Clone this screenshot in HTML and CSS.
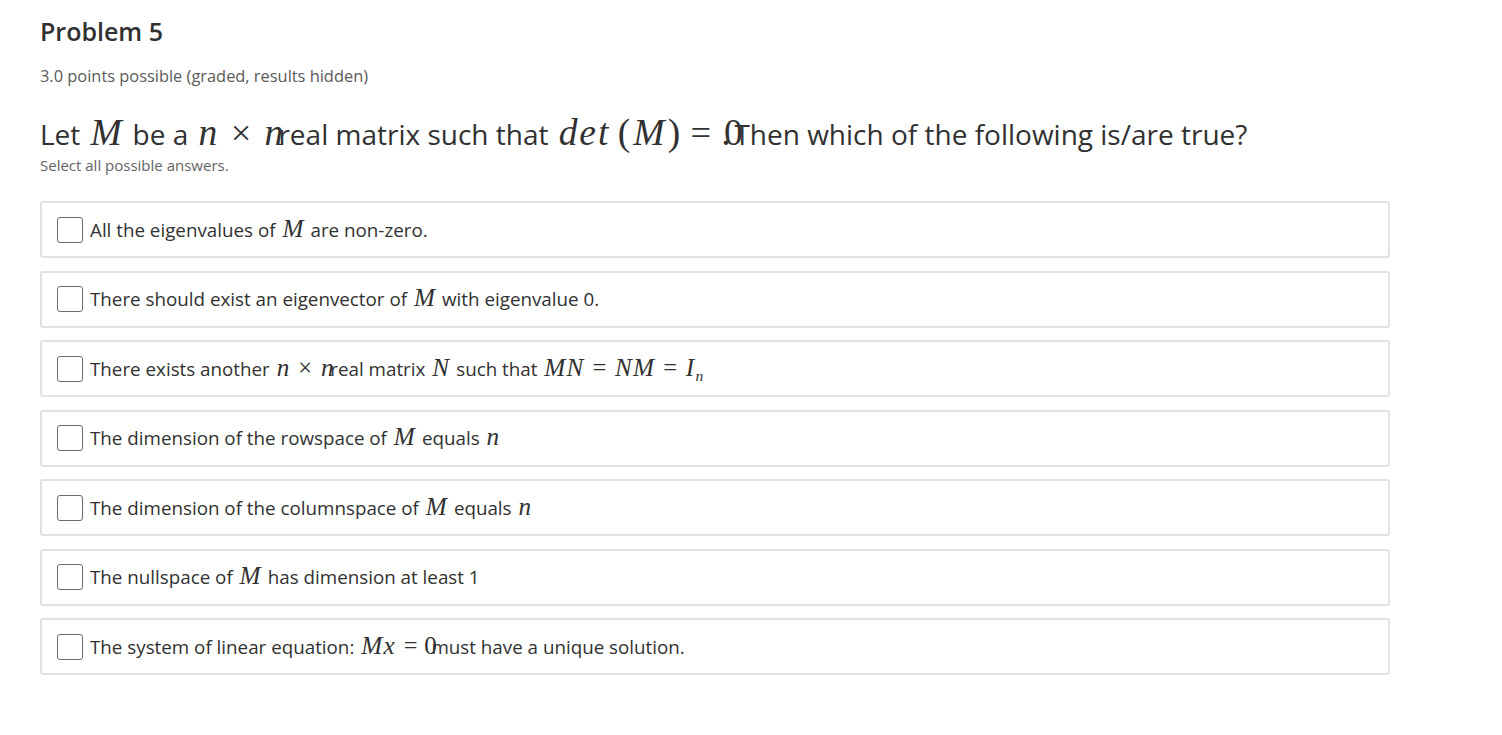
FILE: index.html
```html
<!DOCTYPE html>
<html lang="en">
<head>
<meta charset="utf-8">
<title>Problem 5</title>
<link rel="stylesheet" href="styles.css">
</head>
<body>
<div class="problem">
  <h3 class="title">Problem 5</h3>
  <div class="points">3.0 points possible (graded, results hidden)</div>
  <p class="question">Let <span class="m">M</span> be a <span class="m">n</span><span class="op">×</span><span class="m ov">n</span>real matrix such that <span class="m fn">det</span><span class="mr">(</span><span class="m">M</span><span class="mr">)</span><span class="op">=</span><span class="mr dot">.</span><span class="mr ov">0</span>Then which of the following is/are true?</p>
  <div class="hint">Select all possible answers.</div>
  <div class="choices">
    <label class="choice"><span class="box"></span><span class="txt">All the eigenvalues of <span class="m">M</span> are non-zero.</span></label>
    <label class="choice"><span class="box"></span><span class="txt">There should exist an eigenvector of <span class="m">M</span> with eigenvalue 0.</span></label>
    <label class="choice"><span class="box"></span><span class="txt">There exists another <span class="m">n</span><span class="op">×</span><span class="m ov">n</span>real matrix <span class="m">N</span> such that <span class="m">MN</span><span class="op">=</span><span class="m">NM</span><span class="op">=</span><span class="m">I<sub>n</sub></span></span></label>
    <label class="choice"><span class="box"></span><span class="txt">The dimension of the rowspace of <span class="m">M</span> equals <span class="m">n</span></span></label>
    <label class="choice"><span class="box"></span><span class="txt">The dimension of the columnspace of <span class="m">M</span> equals <span class="m">n</span></span></label>
    <label class="choice"><span class="box"></span><span class="txt">The nullspace of <span class="m">M</span> has dimension at least 1</span></label>
    <label class="choice"><span class="box"></span><span class="txt">The system of linear equation: <span class="m">Mx</span><span class="op">=</span><span class="mr ov">0</span>must have a unique solution.</span></label>
  </div>
</div>
</body>
</html>
```
FILE: styles.css
```css
html, body {
  margin: 0;
  padding: 0;
  background: #ffffff;
}
body {
  font-family: "Open Sans", "Noto Sans", sans-serif;
  color: #313131;
}
.problem {
  padding: 14px 0 0 40px;
  width: 1350px;
}
.title {
  margin: 0;
  font-size: 25px;
  font-weight: 600;
  line-height: 34px;
  color: #313131;
}
.points {
  margin-top: 17px;
  font-size: 16.4px;
  line-height: 22px;
  color: #5a5a5a;
}
.question {
  margin: 30px 0 0 0;
  font-size: 28px;
  line-height: 34px;
  color: #313131;
}
.hint {
  margin-top: 4px;
  font-size: 15px;
  line-height: 20px;
  color: #646464;
}
.m {
  font-family: "Liberation Serif", "DejaVu Serif", serif;
  font-style: italic;
  font-size: 1.34em;
  line-height: 0;
  letter-spacing: 0.05em;
  padding: 0 0.04em 0 0.08em;
}
.fn {
  margin-right: 0.16em;
}
.mr {
  font-family: "Liberation Serif", "DejaVu Serif", serif;
  font-size: 1.34em;
  line-height: 0;
}
.op {
  font-family: "Liberation Serif", "DejaVu Serif", serif;
  font-size: 1.3em;
  line-height: 0;
  margin: 0 0.28em;
}
.ov {
  margin-right: -0.22em;
}
.dot {
  margin-right: -0.18em;
}
.m sub {
  font-size: 0.62em;
  vertical-align: -0.3em;
  line-height: 0;
  letter-spacing: 0;
}
.choices {
  margin-top: 26px;
  display: flex;
  flex-direction: column;
  gap: 12.5px;
}
.choice {
  display: flex;
  align-items: center;
  height: 53px;
  border: 2px solid #e2e2e2;
  border-radius: 3px;
  padding-left: 15px;
  font-size: 18.8px;
  color: #313131;
}
.box {
  flex: none;
  width: 24px;
  height: 24px;
  border: 1px solid #6b6b6b;
  border-radius: 3px;
  margin-right: 7px;
  background: #fff;
}
.txt {
  white-space: nowrap;
}
```
